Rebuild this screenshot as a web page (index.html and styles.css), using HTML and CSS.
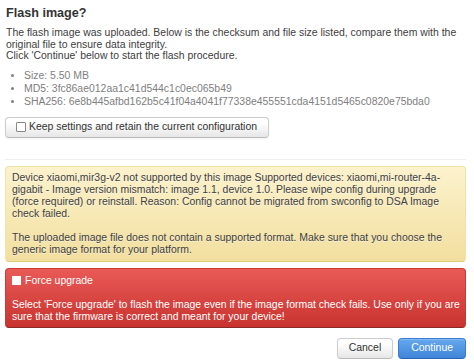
FILE: index.html
```html
<!DOCTYPE html>
<html lang="en">

<head>
    <meta charset="UTF-8">
    <meta name="viewport" content="width=device-width, initial-scale=1.0">
    <title>Flash image?</title>
    <link rel="stylesheet" href="styles.css">
</head>

<body>
    <div class="modal">
        <h4>Flash image?</h4>
        <p class="intro">
            The flash image was uploaded. Below is the checksum and file size listed, compare them with the
            original file to ensure data integrity.<br>
            Click 'Continue' below to start the flash procedure.
        </p>

        <ul class="sums">
            <li>Size: 5.50 MB</li>
            <li>MD5: 3fc86ae012aa1c41d544c1c0ec065b49</li>
            <li>SHA256: 6e8b445afbd162b5c41f04a4041f77338e455551cda4151d5465c0820e75bda0</li>
        </ul>

        <!-- keep settings -->
        <label class="btn keep">
            <input type="checkbox">
            <span>Keep settings and retain the current configuration</span>
        </label>

        <div class="sep"></div>

        <div class="alert warning">
            <p>Device xiaomi,mir3g-v2 not supported by this image Supported devices: xiaomi,mi-router-4a-gigabit - Image version mismatch: image 1.1, device 1.0. Please wipe config during upgrade (force required) or reinstall. Reason: Config cannot be migrated from swconfig to DSA Image check failed.</p>
            <p>The uploaded image file does not contain a supported format. Make sure that you choose the generic image format for your platform.</p>
        </div>

        <div class="alert danger">
            <label class="force">
                <input type="checkbox">
                <span>Force upgrade</span>
            </label>
            <p>Select 'Force upgrade' to flash the image even if the image format check fails. Use only if you are sure that the firmware is correct and meant for your device!</p>
        </div>

        <div class="actions">
            <button class="btn">Cancel</button>
            <button class="btn primary">Continue</button>
        </div>
    </div>
</body>

</html>
```

FILE: styles.css
```css
/* 基础 */
body {
    margin: 0;
    background: #fff;
    color: #404040;
    font-family: 'Liberation Sans', Arial, sans-serif;
    font-size: 10.45px;
    line-height: 12px;
}

.modal {
    padding: 5px 8px 0 5px;
}

h4 {
    margin: 0 0 6px 1px;
    font-size: 12.6px;
    line-height: 16px;
    font-weight: bold;
    color: #333;
}

.intro {
    margin: 0 0 7px 1px;
    line-height: 11.5px;
}

/* 校验值列表 */
.sums {
    margin: 0 0 9px;
    padding-left: 19px;
    color: #808080;
    line-height: 13px;
}

/* 按钮 */
.btn {
    display: inline-flex;
    align-items: center;
    box-sizing: border-box;
    height: 21px;
    padding: 0 11px;
    border: 1px solid #ccc;
    border-bottom-color: #bbb;
    border-radius: 4px;
    background: linear-gradient(#fff, #fff 25%, #e6e6e6);
    box-shadow: inset 0 1px 0 rgba(255, 255, 255, 0.2), 0 1px 2px rgba(0, 0, 0, 0.05);
    color: #333;
    font: inherit;
    cursor: pointer;
}

.keep {
    padding: 0 11px 0 10px;
    gap: 3px;
}

.keep input {
    width: 10px;
    height: 10px;
    margin: 0;
    appearance: none;
    border: 1px solid #888;
    border-radius: 1px;
    background: #fff;
}

.sep {
    margin: 21px 0 6px;
    border-top: 1px solid #eee;
}

/* 提示框 */
.alert {
    margin-bottom: 6px;
    padding: 5px 3px 5px 6px;
    border: 1px solid;
    border-radius: 4px;
}

.alert p {
    margin: 0;
}

.alert p + p {
    margin-top: 12px;
}

.warning {
    background: linear-gradient(#fcf2cd, #f2df9f);
    border-color: #f0e2a8 #f0e2a8 #e4cc7a;
    text-shadow: 0 1px 0 rgba(255, 255, 255, 0.5);
}

.danger {
    background: linear-gradient(#e95a56, #c8332f);
    border-color: #c43c35 #c43c35 #882a25;
    color: #fff;
    padding-top: 6px;
    padding-bottom: 4px;
}

.force {
    display: flex;
    align-items: center;
    gap: 4px;
    margin-bottom: 12px;
}

.force input {
    width: 9px;
    height: 9px;
    margin: 0;
    appearance: none;
    border: none;
    background: #fff;
}

/* 底部按钮 */
.actions {
    display: flex;
    justify-content: flex-end;
    gap: 5px;
    margin-top: 10px;
}

.primary {
    border-color: #3b7dd0 #3b7dd0 #2a65b5;
    background: linear-gradient(#66a8ee, #3f85d8);
    color: #fff;
    padding: 0 12px;
}
```
